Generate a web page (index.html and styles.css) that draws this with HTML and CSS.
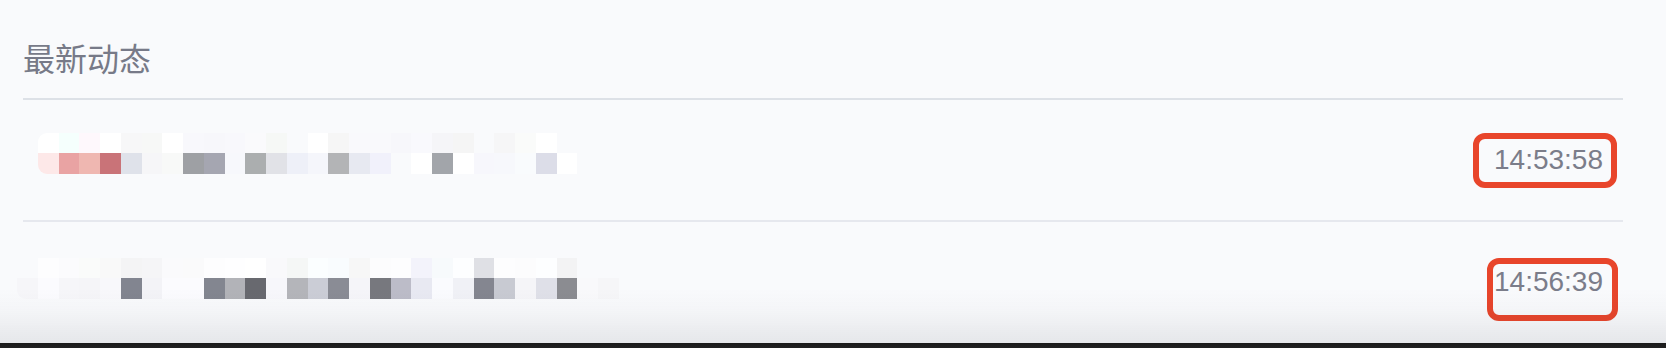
FILE: index.html
```html
<!DOCTYPE html>
<html lang="zh-CN">
<head>
<meta charset="utf-8">
<title>最新动态</title>
<link rel="stylesheet" href="styles.css">
</head>
<body>
<div class="panel">
  <div class="panel-head">最新动态</div>
  <div class="feed">
    <div class="feed-row">
      <div class="mosaic mosaic-a">
        <i></i>
        <i class="rtl" style="background:#ffffff"></i><i style="background:#f5fffd"></i><i style="background:#fef8fc"></i><i style="background:#ffffff"></i><i style="background:#f7f7f8"></i><i style="background:#f7f8f7"></i><i style="background:#ffffff"></i><i style="background:#f8f8fc"></i><i style="background:#f7f7fb"></i><i style="background:#f8f8fc"></i><i style="background:#fafafc"></i><i style="background:#f6f8f6"></i><i style="background:#f9fafc"></i><i style="background:#ffffff"></i><i style="background:#f6f6f6"></i><i style="background:#f9f9fc"></i><i style="background:#f9f9fc"></i><i style="background:#f7f7fb"></i><i style="background:#f9f9fd"></i><i style="background:#f5f5f8"></i><i style="background:#f5f5f5"></i><i style="background:#f9fafc"></i><i style="background:#f6f6f7"></i><i style="background:#fafbfa"></i><i style="background:#ffffff"></i>
        <i></i><i></i><i></i>
        <i></i>
        <i class="rbl" style="background:#fde8e8"></i><i style="background:#e9a3a3"></i><i style="background:#efb7b1"></i><i style="background:#c97378"></i><i style="background:#dfe2ea"></i><i style="background:#f6f6f8"></i><i style="background:#f8f9f8"></i><i style="background:#9ea0a4"></i><i style="background:#a5a6b1"></i><i style="background:#f7f8fc"></i><i style="background:#abaeaf"></i><i style="background:#e1e2e7"></i><i style="background:#eef0f8"></i><i style="background:#f5f6fb"></i><i style="background:#b3b4b6"></i><i style="background:#e7e9f1"></i><i style="background:#f1f1fb"></i><i style="background:#f9fafc"></i><i style="background:#ffffff"></i><i style="background:#a2a5aa"></i><i style="background:#ffffff"></i><i style="background:#f7f7fc"></i><i style="background:#f7f8fc"></i><i style="background:#f9fbfd"></i><i style="background:#dcdde8"></i><i style="background:#ffffff"></i>
        <i></i><i></i>
      </div>
      <span class="time time-a">14:53:58<b class="mark mark-a"></b></span>
    </div>
    <div class="feed-row">
      <div class="mosaic mosaic-b">
        <i></i>
        <i style="background:#fdfdfe"></i><i style="background:#fbfbfd"></i><i style="background:#fafbfa"></i><i style="background:#f9f9f9"></i><i style="background:#f4f4f5"></i><i style="background:#f5f5f7"></i><i style="background:#fafafc"></i><i style="background:#fafafb"></i><i style="background:#fdfdfe"></i><i style="background:#fefeff"></i><i style="background:#ffffff"></i><i style="background:#f9f9fb"></i><i style="background:#f5f7f6"></i><i style="background:#fbfeff"></i><i style="background:#f9fcfe"></i><i style="background:#f7f7f7"></i><i style="background:#fcfcfd"></i><i style="background:#fdfdfe"></i><i style="background:#f3f3fb"></i><i style="background:#f7fafc"></i><i style="background:#fdfeff"></i><i style="background:#dfe0e5"></i><i style="background:#fdfdfe"></i><i style="background:#fcfcfd"></i><i style="background:#fdfeff"></i><i style="background:#f3f3f4"></i>
        <i></i><i></i>
        <i class="rbl" style="background:#f6f6f9"></i><i style="background:#fbfbfe"></i><i style="background:#f6f6f9"></i><i style="background:#f5f5f8"></i><i style="background:#f8f8fb"></i><i style="background:#828590"></i><i style="background:#f3f3f7"></i><i style="background:#fbfbfe"></i><i style="background:#fbfbfe"></i><i style="background:#838690"></i><i style="background:#b2b3b8"></i><i style="background:#68696f"></i><i style="background:#f7f7fb"></i><i style="background:#b4b5ba"></i><i style="background:#cbcdd6"></i><i style="background:#8a8c95"></i><i style="background:#f5f5f9"></i><i style="background:#77787e"></i><i style="background:#bcbcc8"></i><i style="background:#e8e9f2"></i><i style="background:#fafbfe"></i><i style="background:#f0f1f6"></i><i style="background:#848690"></i><i style="background:#c8cad2"></i><i style="background:#f5f5f8"></i><i style="background:#dfe0e8"></i><i style="background:#8b8c91"></i><i style="background:#f9f9fb"></i><i style="background:#f6f6f8"></i>
      </div>
      <span class="time time-b">14:56:39<b class="mark mark-b"></b></span>
    </div>
  </div>
</div>
<div class="screen-edge"></div>
</body>
</html>
```

FILE: styles.css
```css
html {
  height: 100%;
  background: #f9fafc;
}

body {
  margin: 0;
  height: 100%;
  overflow: hidden;
  background: #f9fafc;
}

.panel {
  margin-left: 23px;
  width: 1600px;
}

.panel-head {
  padding: 41px 0 25px 0;
  font-family: "Noto Sans CJK SC", "Noto Sans", sans-serif;
  font-size: 32px;
  line-height: 32px;
  color: #777a88;
  border-bottom: 2px solid #dde1e7;
}

.feed-row {
  height: 120px;
  display: flex;
  justify-content: space-between;
  align-items: center;
}

.feed-row + .feed-row {
  border-top: 2px solid #e6e8ee;
}

.mosaic {
  align-self: flex-start;
  margin-left: -6px;
  display: grid;
  grid-template-columns: repeat(29, 20.76px);
  grid-template-rows: 20px 21px;
}

.mosaic i {
  display: block;
}

.mosaic-a {
  margin-top: 33px;
}

.mosaic-b {
  margin-top: 36px;
}

.mosaic .rtl {
  border-top-left-radius: 9px;
}

.mosaic .rbl {
  border-bottom-left-radius: 9px;
}

.time {
  position: relative;
  margin-right: 20px;
  font-family: "Liberation Sans", Arial, sans-serif;
  font-size: 28px;
  line-height: 32px;
  color: #7b7d8a;
}

.mark {
  position: absolute;
  border: 6px solid #e8452b;
  border-radius: 12px;
}

.mark-a {
  left: -21px;
  right: -14px;
  top: -11px;
  bottom: -12px;
}

.mark-b {
  left: -7px;
  right: -15px;
  top: -8px;
  bottom: -23px;
}

.screen-edge {
  position: fixed;
  left: 0;
  right: 0;
  bottom: 0;
  height: 60px;
  pointer-events: none;
  background: linear-gradient(to bottom,
    rgba(40, 45, 60, 0) 0px,
    rgba(40, 45, 60, 0.02) 20px,
    rgba(40, 45, 60, 0.09) 55px,
    #1a1a1a 55px,
    #222222 60px);
}
```
